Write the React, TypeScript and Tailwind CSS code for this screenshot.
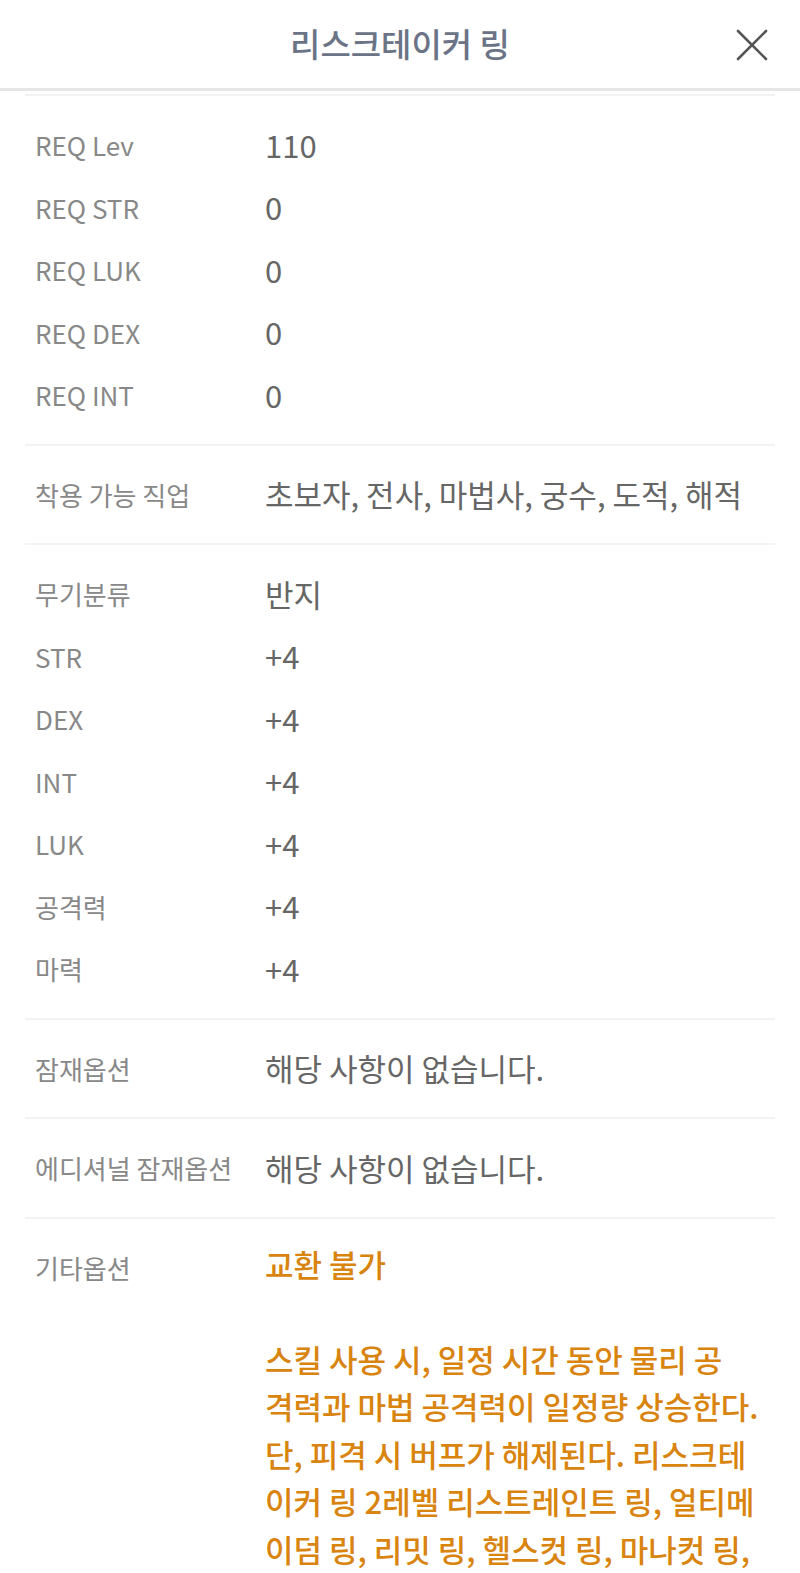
import React from "react";

type Row = { label: string; value: string };

const reqRows: Row[] = [
  { label: "REQ Lev", value: "110" },
  { label: "REQ STR", value: "0" },
  { label: "REQ LUK", value: "0" },
  { label: "REQ DEX", value: "0" },
  { label: "REQ INT", value: "0" },
];

const statRows: Row[] = [
  { label: "무기분류", value: "반지" },
  { label: "STR", value: "+4" },
  { label: "DEX", value: "+4" },
  { label: "INT", value: "+4" },
  { label: "LUK", value: "+4" },
  { label: "공격력", value: "+4" },
  { label: "마력", value: "+4" },
];

// line breaks follow the original wrapping (word-break: break-all)
const descLines = [
  "스킬 사용 시, 일정 시간 동안 물리 공",
  "격력과 마법 공격력이 일정량 상승한다.",
  "단, 피격 시 버프가 해제된다. 리스크테",
  "이커 링 2레벨 리스트레인트 링, 얼티메",
  "이덤 링, 리밋 링, 헬스컷 링, 마나컷 링,",
];

function InfoRow({ label, value }: Row) {
  return (
    <div className="flex items-center h-[62.5px]">
      <div className="w-[240px] pl-[10px] text-[26px] text-[#888888] whitespace-nowrap">{label}</div>
      <div className="text-[31px] text-[#666666] whitespace-nowrap">{value}</div>
    </div>
  );
}

function Section({ rows }: { rows: Row[] }) {
  return (
    <div className="py-[17.5px] border-b-2 border-[#f3f3f3]">
      {rows.map((r) => (
        <InfoRow key={r.label} {...r} />
      ))}
    </div>
  );
}

export default function App() {
  return (
    <div
      className="w-[800px] min-h-[1573px] bg-white overflow-hidden"
      style={{ fontFamily: '"Noto Sans CJK KR", "Noto Sans", sans-serif' }}
    >
      {/* Header */}
      <div className="relative h-[91px] border-b-[3px] border-[#e6e6e6] flex items-center justify-center">
        <h1 className="text-[33px] text-[#6b7386] font-medium">리스크테이커 링</h1>
        <button className="absolute right-[30px] top-[27px] w-[36px] h-[36px] flex items-center justify-center" aria-label="닫기">
          <svg width="34" height="34" viewBox="0 0 34 34" fill="none">
            <path d="M3 3L31 31M31 3L3 31" stroke="#555555" strokeWidth="2.6" strokeLinecap="round" />
          </svg>
        </button>
      </div>

      <div className="px-[25px]">
        <div className="border-t-2 border-[#f3f3f3] mt-[3px]" />
        <Section rows={reqRows} />
        <Section rows={[{ label: "착용 가능 직업", value: "초보자, 전사, 마법사, 궁수, 도적, 해적" }]} />
        <Section rows={statRows} />
        <Section rows={[{ label: "잠재옵션", value: "해당 사항이 없습니다." }]} />
        <Section rows={[{ label: "에디셔널 잠재옵션", value: "해당 사항이 없습니다." }]} />

        {/* 기타옵션 */}
        <div className="flex items-start">
          <div className="w-[240px] pl-[10px] pt-[17px] h-[80px] flex items-center text-[26px] text-[#888888] whitespace-nowrap">
            기타옵션
          </div>
          <div className="pt-[21px] text-[31px] leading-[47.5px] text-[#d8840f] font-medium">
            <div className="whitespace-nowrap">교환 불가</div>
            <div className="h-[47.5px]" />
            {descLines.map((line) => (
              <div key={line} className="whitespace-nowrap">
                {line}
              </div>
            ))}
          </div>
        </div>
      </div>
    </div>
  );
}
